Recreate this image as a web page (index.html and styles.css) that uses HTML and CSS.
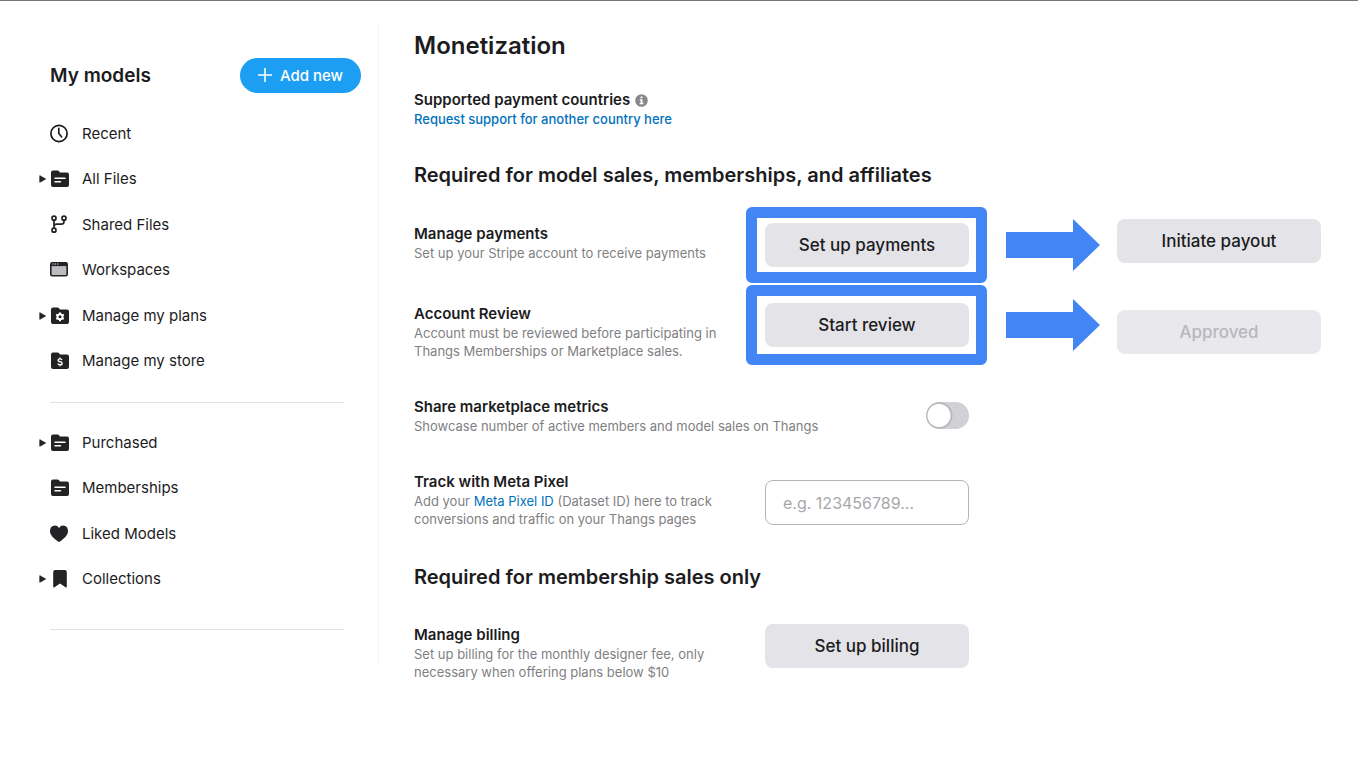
FILE: index.html
```html
<!DOCTYPE html>
<html lang="en">
<head>
<meta charset="utf-8">
<title>Monetization</title>
<link rel="stylesheet" href="styles.css">
</head>
<body>
<svg class="sprite" aria-hidden="true">
  <symbol id="caret" viewBox="0 0 7 8"><path d="M0.8 0.7v6.6L6.6 4z" fill="#232325" stroke="#232325" stroke-width=".8" stroke-linejoin="round"/></symbol>
  <symbol id="folder" viewBox="0 0 20 20"><path d="M3 1.500h4.600q.8 0 1.300.6l1 1.400h7.100q2 0 2 2v10.500q0 2-2 2H3q-2 0-2-2V3.500q0-2 2-2z" fill="#232325"/></symbol>
  <symbol id="folder-files" viewBox="0 0 20 20"><use href="#folder"/><path d="M5 9.300h10M5 12.800h5.500" stroke="#fff" stroke-width="1.500" stroke-linecap="round"/></symbol>
</svg>
<div class="page">
  <aside class="sidebar">
    <div class="sidebar-head">
      <h2 class="sidebar-title">My models</h2>
      <button class="add-button" type="button">
        <svg width="14" height="14" viewBox="0 0 14 14" aria-hidden="true"><path d="M7 .5v13M.5 7h13" stroke="#fff" stroke-width="1.600" stroke-linecap="round"/></svg>
        Add new
      </button>
    </div>
    <nav class="nav">
      <ul class="nav-list nav-primary">
        <li><a class="nav-item" href="#"><span class="caret"></span>
          <svg class="icon" viewBox="0 0 20 20"><circle cx="9" cy="9.500" r="8.100" fill="none" stroke="#161618" stroke-width="1.700"/><path d="M8.800 4.200v5.300l2.800 3.300" fill="none" stroke="#161618" stroke-width="1.600" stroke-linecap="round"/></svg>Recent</a></li>
        <li><a class="nav-item" href="#"><svg class="caret"><use href="#caret"/></svg><svg class="icon"><use href="#folder-files"/></svg>All Files</a></li>
        <li><a class="nav-item" href="#"><span class="caret"></span>
          <svg class="icon" viewBox="0 0 20 20"><g fill="none" stroke="#232325" stroke-width="1.700"><circle cx="4" cy="3.200" r="2"/><circle cx="14" cy="3.200" r="2"/><circle cx="4" cy="15.200" r="2"/><path d="M4 5.200v8M14 5.200v1.300q0 2.700-2.700 2.700H6.700Q4 9.200 4 11.500"/></g></svg>Shared Files</a></li>
        <li><a class="nav-item" href="#"><span class="caret"></span>
          <svg class="icon" viewBox="0 0 20 20"><rect x=".8" y="2.800" width="16.400" height="13" rx="1.500" fill="#bcbcbe" stroke="#232325" stroke-width="1.600"/><path d="M1 2.500h16v3.600H1z" fill="#232325"/><path d="M2.300 4h1.200M4.700 4h1.200M7.100 4h1.200" stroke="#fff" stroke-width="1.200"/></svg>Workspaces</a></li>
        <li><a class="nav-item" href="#"><svg class="caret"><use href="#caret"/></svg>
          <svg class="icon" viewBox="0 0 20 20"><use href="#folder"/><circle cx="10" cy="10.800" r="2.500" fill="none" stroke="#fff" stroke-width="2"/><path d="M10 6.400v1.800M10 13.400v1.800M6.200 8.600l1.500.9M12.300 12.100l1.500.9M6.200 13l1.500-.9M12.300 9.500l1.500-.9" stroke="#fff" stroke-width="2"/></svg>Manage my plans</a></li>
        <li><a class="nav-item" href="#"><span class="caret"></span>
          <svg class="icon" viewBox="0 0 20 20"><use href="#folder"/><path d="M12 9.100q-.5-1.200-2-1.200-1.900 0-1.900 1.400 0 1.200 1.900 1.500 2.100.3 2.100 1.600 0 1.400-2.100 1.400-1.700 0-2.200-1.300M10 6.500v1.400M10 13.800v1.400" fill="none" stroke="#fff" stroke-width="1.400"/></svg>Manage my store</a></li>
      </ul>
      <ul class="nav-list nav-secondary">
        <li><a class="nav-item" href="#"><svg class="caret"><use href="#caret"/></svg><svg class="icon"><use href="#folder-files"/></svg>Purchased</a></li>
        <li><a class="nav-item" href="#"><span class="caret"></span><svg class="icon"><use href="#folder-files"/></svg>Memberships</a></li>
        <li><a class="nav-item" href="#"><span class="caret"></span>
          <svg class="icon" viewBox="0 0 20 20"><path d="M9 4Q7.500 1.600 5 1.600 0 1.800 0 7.300c0 4.200 4.500 7.600 7.600 9.900q1.400 1 2.800 0C13.500 14.900 18 11.500 18 7.300Q18 1.800 13 1.600 10.500 1.600 9 4z" fill="#232325"/></svg>Liked Models</a></li>
        <li><a class="nav-item" href="#"><svg class="caret"><use href="#caret"/></svg>
          <svg class="icon" viewBox="0 0 20 20"><path d="M5.200 1h9.600q2 0 2 2v14.500q0 1.500-1.300.7L10 14.500l-5.500 3.700q-1.300.8-1.300-.7V3q0-2 2-2z" fill="#232325"/></svg>Collections</a></li>
      </ul>
    </nav>
  </aside>

  <main class="main">
    <h1 class="page-title">Monetization</h1>
    <section class="countries">
      <h3 class="setting-title">Supported payment countries
        <svg class="info" width="13" height="13" viewBox="0 0 13 13" role="img" aria-label="Info"><circle cx="6.500" cy="6.500" r="6.300" fill="#88888b"/><path d="M5.600 2.500h1.900v1.700H5.600zM4.700 5.200h2.800v3.900h.9v1.200H4.600V9.100h1V6.400h-.9z" fill="#fff"/></svg>
      </h3>
      <a class="request-link" href="#">Request support for another country here</a>
    </section>

    <h2 class="section-title">Required for model sales, memberships, and affiliates</h2>
    <div class="flow">
      <div class="settings">
        <div class="setting">
          <div class="setting-text"><h3 class="setting-title">Manage payments</h3><p class="setting-desc">Set up your Stripe account to receive payments</p></div>
          <div class="callout"><button class="button" type="button">Set up payments</button></div>
        </div>
        <div class="setting">
          <div class="setting-text"><h3 class="setting-title">Account Review</h3><p class="setting-desc">Account must be reviewed before participating in<br>Thangs Memberships or Marketplace sales.</p></div>
          <div class="callout callout-tall"><button class="button" type="button">Start review</button></div>
        </div>
        <div class="setting">
          <div class="setting-text"><h3 class="setting-title"><label for="metrics">Share marketplace metrics</label></h3><p class="setting-desc">Showcase number of active members and model sales on Thangs</p></div>
          <input class="toggle" type="checkbox" role="switch" id="metrics">
        </div>
        <div class="setting">
          <div class="setting-text"><h3 class="setting-title"><label for="pixel">Track with Meta Pixel</label></h3><p class="setting-desc">Add your <a class="link" href="#">Meta Pixel ID</a> (Dataset ID) here to track<br>conversions and traffic on your Thangs pages</p></div>
          <input class="field" type="text" id="pixel" placeholder="e.g. 123456789...">
        </div>
      </div>
      <div class="arrows" aria-hidden="true">
        <svg width="94" height="52" viewBox="0 0 94 52"><path d="M0 13h67V0l27 26-27 26V39H0z" fill="#4285f4"/></svg>
        <svg width="94" height="52" viewBox="0 0 94 52"><path d="M0 13h67V0l27 26-27 26V39H0z" fill="#4285f4"/></svg>
      </div>
      <div class="outcomes">
        <button class="button" type="button">Initiate payout</button>
        <button class="button" type="button" disabled>Approved</button>
      </div>
    </div>

    <h2 class="section-title section-title-last">Required for membership sales only</h2>
    <div class="settings">
      <div class="setting">
        <div class="setting-text"><h3 class="setting-title">Manage billing</h3><p class="setting-desc">Set up billing for the monthly designer fee, only<br>necessary when offering plans below $10</p></div>
        <button class="button" type="button">Set up billing</button>
      </div>
    </div>
  </main>
</div>
</body>
</html>
```
FILE: styles.css
```css
* { box-sizing: border-box; }
body {
  margin: 0;
  border-top: 1px solid #77777a;
  background: #fff;
  color: #1c1c1e;
  font-family: Inter, "Liberation Sans", sans-serif;
}
h1, h2, h3, p, ul { margin: 0; padding: 0; }
ul { list-style: none; }
a { text-decoration: none; }
button, input { font-family: inherit; }
.sprite { display: none; }

.page { display: flex; align-items: flex-start; padding-top: 23px; }

.sidebar {
  flex: 0 0 379px;
  padding: 34px 17px 35px 38px;
  border-right: 1px solid #f3f3f5;
}
.sidebar-head { display: flex; align-items: center; justify-content: space-between; padding-left: 12px; }
.sidebar-title { font-size: 19px; line-height: 28px; font-weight: 600; }
.add-button {
  display: flex; align-items: center; justify-content: center; gap: 8px;
  width: 121px; height: 35px; padding: 0 0 1px;
  border: 0; border-radius: 18px;
  background: #1c9ff3; color: #fff;
  font-size: 15px; font-weight: 500;
}
.nav { padding-top: 18px; }
.nav-list { position: relative; display: grid; grid-auto-rows: 1fr; margin-right: 17px; }
.nav-primary { min-height: 273px; margin-bottom: 36px; }
.nav-secondary { min-height: 182px; margin-bottom: 27px; }
.nav-list::after {
  content: ""; position: absolute; left: 12px; right: 0; top: 100%;
  margin-top: 18px; border-top: 1px solid #e3e3e6;
}
.nav-secondary::after { margin-top: 27px; }
.nav-item {
  display: flex; align-items: center; height: 100%;
  color: #1c1c1e; font-size: 15px; line-height: 20px;
}
.caret { flex: none; width: 7px; height: 8px; margin: 0 4px 0 1px; }
.icon { flex: none; width: 20px; height: 20px; margin-right: 12px; }

.main { flex: 1; min-width: 0; padding: 6px 37px 0 35px; }
.page-title { font-size: 24px; line-height: 32px; font-weight: 600; }
.countries { margin: 28px 0 33px; }
.setting-title { display: flex; align-items: center; gap: 5px; font-size: 15px; line-height: 20px; font-weight: 600; }
.request-link { display: block; color: #0072bc; font-size: 13px; line-height: 18px; font-weight: 500; }
.link { color: #0072bc; }
.section-title { margin-bottom: 34px; font-size: 20px; line-height: 28px; font-weight: 600; }
.section-title-last { margin: 35px 0 33px; }

.flow { display: flex; justify-content: space-between; align-items: flex-start; }
.settings { display: flex; flex-direction: column; gap: 36px; width: 555px; }
.setting { display: flex; justify-content: space-between; align-items: flex-start; }
.setting-text { padding-top: 1px; white-space: nowrap; }
.setting-desc { color: #7f7f82; font-size: 13px; line-height: 18px; }
.button {
  width: 204px; height: 44px; padding: 0 0 1px;
  border: 0; border-radius: 8px;
  background: #e4e3e8; color: #1c1c1e;
  font-size: 17px; font-weight: 500;
}
.button:disabled { background: #e9e9ed; color: #b7b7bc; }
.callout { position: relative; }
.callout::after {
  content: ""; position: absolute; inset: -16px -18px -16px -19px;
  border: 11px solid #4285f4; border-radius: 6px; pointer-events: none;
}
.callout-tall::after { inset: -18px -18px -18px -19px; }
.toggle {
  appearance: none; width: 43px; height: 27px; margin: 6px 0 0;
  border-radius: 14px;
  background: radial-gradient(circle at 13px 50%, #fff 11px, #b9b9be 12px, #b9b9be 13px, #d0d0d5 14px);
}
.field {
  width: 204px; height: 45px; margin: 9px 0 0; padding: 0 17px;
  border: 1px solid #b5b5b8; border-radius: 8px;
  font-size: 16px;
}
.field::placeholder { color: #a8a8ab; opacity: 1; }
.arrows { display: flex; flex-direction: column; gap: 28px; padding-left: 19px; margin-top: -4px; }
.outcomes { display: flex; flex-direction: column; gap: 47px; margin-top: -4px; }
```
